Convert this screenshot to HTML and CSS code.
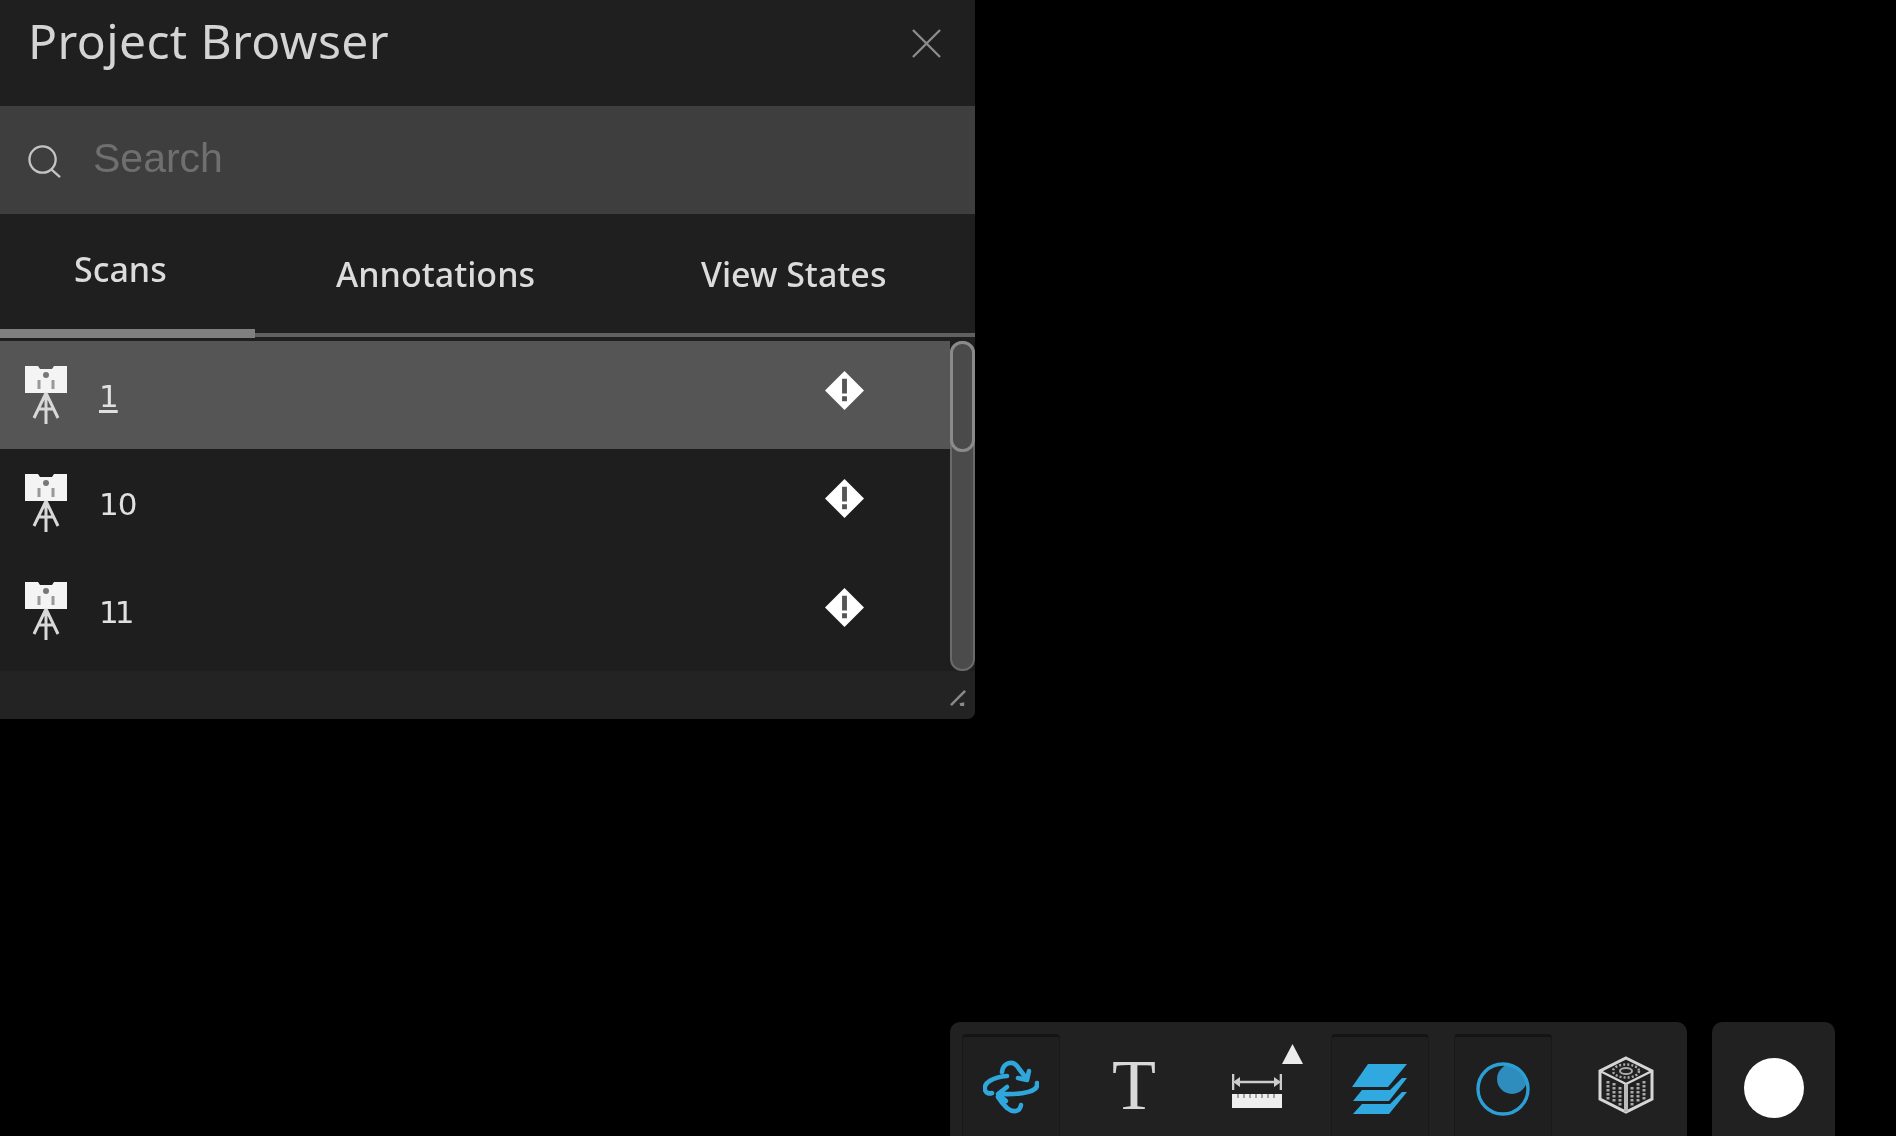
FILE: index.html
```html
<!DOCTYPE html>
<html lang="en">
<head>
<meta charset="utf-8">
<title>Project Browser</title>
<link rel="stylesheet" href="styles.css">
</head>
<body>
<svg class="defs" width="0" height="0" aria-hidden="true">
  <defs><clipPath id="moon-clip"><circle cx="27" cy="27" r="25"/></clipPath></defs>
  <symbol id="scanner" viewBox="0 0 44 62">
    <path d="M1 2h13l2 3h12l2-3h13v27H1z" fill="#f4f4f4"/>
    <circle cx="22" cy="11" r="3" fill="#777"/>
    <path d="M15 16v9M29 16v9" stroke="#999" stroke-width="3" fill="none"/>
    <path d="M22 29L10 54M22 29L34 54M22 29V60M14 45H30" stroke="#d8d8d8" stroke-width="3" fill="none"/>
  </symbol>
  <symbol id="warn" viewBox="0 0 42 42">
    <path d="M21 1L41 21L21 41L1 21z" fill="#fff"/>
    <path d="M18.5 9h5v15h-5zM18.5 27h5v5h-5z" fill="#555"/>
  </symbol>
</svg>
<div class="app">
  <section class="panel">
    <header class="panel-head">
      <h1 class="panel-title">Project Browser</h1>
      <svg class="close" viewBox="0 0 30 30"><path d="M1 1L29 29M29 1L1 29" stroke="#8c8c8c" stroke-width="2.4" fill="none"/></svg>
    </header>
    <div class="search">
      <svg class="search-icon" viewBox="0 0 34 34"><circle cx="15" cy="15" r="13.5" stroke="#c4c4c4" stroke-width="2.4" fill="none"/><path d="M24 25L33 33" stroke="#c4c4c4" stroke-width="2.4"/></svg>
      <span class="search-text">Search</span>
    </div>
    <nav class="tabs">
      <span class="tab tab-scans">Scans</span>
      <span class="tab tab-annotations">Annotations</span>
      <span class="tab tab-views">View States</span>
    </nav>
    <div class="list-wrap">
      <ul class="rows">
        <li class="row row-selected">
          <svg class="scanner"><use href="#scanner"/></svg>
          <span class="row-name row-name-under">1</span>
          <svg class="warn"><use href="#warn"/></svg>
        </li>
        <li class="row">
          <svg class="scanner"><use href="#scanner"/></svg>
          <span class="row-name">10</span>
          <svg class="warn"><use href="#warn"/></svg>
        </li>
        <li class="row">
          <svg class="scanner"><use href="#scanner"/></svg>
          <span class="row-name row-name-tight">11</span>
          <svg class="warn"><use href="#warn"/></svg>
        </li>
      </ul>
      <div class="track"><div class="thumb"></div></div>
    </div>
    <footer class="panel-foot">
      <svg class="grip" viewBox="0 0 18 18"><path d="M1 17L16 2" stroke="#8a8a8a" stroke-width="2.6" fill="none"/><path d="M10 15l5-1v4h-4z" fill="#8a8a8a"/></svg>
    </footer>
  </section>

  <div class="dock">
    <div class="toolbar">
      <div class="tool tool-on">
        <svg class="ic-sync" viewBox="0 0 56 56" fill="none" stroke="#2fa6dc" stroke-width="4.6" stroke-linecap="round" stroke-linejoin="round">
          <path d="M19 13C20 4 29 1 34 7L43 19"/>
          <path d="M35 19L44 21L46 12"/>
          <path d="M24 17C10 18 0 24 2 31C3 34 6 35 9 34"/>
          <path d="M54 24C56 32 42 36 16 35"/>
          <path d="M24 28L15 35L23 42"/>
          <path d="M15 38C18 43 21 46 24 49C30 54 37 53 38 46"/>
        </svg>
      </div>
      <div class="tool"><span class="t-glyph">T</span></div>
      <div class="tool tool-measure">
        <svg class="ic-tri" viewBox="0 0 22 22"><path d="M11 0L22 21H0z" fill="#ececec"/></svg>
        <svg class="ic-ruler" viewBox="0 0 50 34">
          <path d="M1 0V16M49 0V16M4 8H46" stroke="#ccc" stroke-width="2.6" fill="none"/>
          <path d="M1 8L8 3V13zM49 8L42 3V13z" fill="#ccc"/>
          <path d="M0 20H50V34H0z" fill="#eee"/>
          <path d="M6 20v4M12 20v4M18 20v4M24 20v4M30 20v4M36 20v4M42 20v4" stroke="#888" stroke-width="1.5"/>
        </svg>
      </div>
      <div class="tool tool-on">
        <svg class="ic-layers" viewBox="0 0 56 50" fill="#2fa9e0">
          <path d="M16 0H55L36 23H0z"/>
          <path d="M50 14L55 14L37 37H1L10 26H38z"/>
          <path d="M50 28L55 28L37 50H1L10 40H38z"/>
        </svg>
      </div>
      <div class="tool tool-on">
        <svg class="ic-moon" viewBox="0 0 54 54">
          <circle cx="36" cy="17" r="15" fill="#2e8dbd" clip-path="url(#moon-clip)"/>
          <circle cx="27" cy="27" r="25" fill="none" stroke="#2c9fd4" stroke-width="3.4"/>
        </svg>
      </div>
      <div class="tool">
        <svg class="ic-cube" viewBox="0 0 56 58" fill="none" stroke="#d6d6d6">
          <path d="M28 2L54 15V43L28 56L2 43V15z" stroke-width="3"/>
          <path d="M2 15L28 28L54 15" stroke-width="2.4"/>
          <path d="M28 28V56" stroke-width="4" stroke="#bbb"/>
          <ellipse cx="28" cy="15" rx="13" ry="6.5" stroke-dasharray="2 2" stroke-width="2.4" stroke="#aaa"/>
          <ellipse cx="28" cy="15" rx="6" ry="3" stroke-width="2" stroke="#aaa"/>
          <path d="M10 25V44M16 27V47M22 31V50M34 31V50M40 27V47M46 25V44" stroke-dasharray="2.5 1.5" stroke-width="3" stroke="#aaa"/>
        </svg>
      </div>
    </div>
    <div class="toolbar toolbar-record">
      <span class="dot"></span>
    </div>
  </div>
</div>
</body>
</html>
```

FILE: styles.css
```css
* { box-sizing: border-box; }
html, body { margin: 0; padding: 0; background: #000; }
.defs { position: absolute; }

.app {
  width: 1896px;
  height: 1136px;
  overflow: hidden;
  display: flex;
  flex-direction: column;
  justify-content: space-between;
  background: #000;
  filter: blur(0.6px);
}

/* Project browser */
.panel {
  width: 975px;
  height: 719px;
  display: flex;
  flex-direction: column;
  background: #1f1f1f;
  border-bottom-right-radius: 8px;
  overflow: hidden;
}
.panel-head {
  height: 106px;
  flex: none;
  display: flex;
  align-items: flex-start;
  justify-content: space-between;
  padding: 13px 34px 0 28px;
}
.panel-title {
  margin: 0;
  font: 400 48px/56px "Noto Sans", sans-serif;
  letter-spacing: 0.4px;
  color: #d4d4d4;
}
.close { width: 29px; height: 29px; margin-top: 16px; }

.search {
  height: 108px;
  flex: none;
  display: flex;
  align-items: center;
  padding-left: 28px;
  gap: 32px;
  background: #3e3e3e;
}
.search-icon { width: 33px; height: 33px; margin-top: 2px; }
.search-text {
  font: 400 41px/48px "Liberation Sans", sans-serif;
  color: #6f6f6f;
  margin-top: -5px;
}

.tabs {
  height: 123px;
  flex: none;
  position: relative;
  display: flex;
  border-bottom: 4px solid #616161;
  margin-bottom: 4px;
}
.tab {
  font: 500 34px/44px "Noto Sans", sans-serif;
  color: #dcdcdc;
}
.tab-scans {
  width: 255px;
  flex: none;
  padding: 33px 0 0 74px;
  position: relative;
}
.tab-scans::after {
  content: "";
  position: absolute;
  left: 0;
  bottom: -5px;
  width: 255px;
  height: 9px;
  background: #808080;
}
.tab-annotations { margin-left: 81px; padding-top: 38px; }
.tab-views { margin-left: 166px; padding-top: 38px; }

.list-wrap {
  height: 330px;
  flex: none;
  display: flex;
  background: #1e1e1e;
}
.rows { flex: 1; margin: 0; padding: 0; list-style: none; }
.row {
  height: 108.3px;
  display: flex;
  align-items: center;
  padding-left: 24px;
  position: relative;
}
.row-selected { background: #555; }
.scanner { width: 44px; height: 62px; flex: none; margin-top: -1px; }
.row-name {
  margin-left: 31px;
  width: 0;
  flex: 1;
  font: 400 31px/40px "DejaVu Sans", sans-serif;
  letter-spacing: -1px;
  color: #e0e0e0;
  margin-top: 1px;
}
.row-name-under { text-decoration: underline; text-underline-offset: 3px; }
.row-name-tight { letter-spacing: -4px; }
.warn { width: 41px; height: 41px; flex: none; margin-right: 85px; margin-top: -9px; }

.track {
  width: 25px;
  flex: none;
  background: #4b4b4b;
  border: 2px solid #6a6a6a;
  border-radius: 12px;
  position: relative;
}
.thumb {
  position: absolute;
  left: -2px;
  right: -2px;
  top: -2px;
  height: 111px;
  background: #4a4a4a;
  border: 3px solid #8a8a8a;
  border-radius: 12px;
}

.panel-foot {
  flex: 1;
  background: #232323;
  display: flex;
  justify-content: flex-end;
  align-items: center;
  padding: 0 8px 0 0;
}
.grip { width: 17px; height: 17px; margin-top: 4px; }

/* Bottom toolbars */
.dock {
  display: flex;
  gap: 25px;
  margin-left: 950px;
  height: 114px;
  flex: none;
}
.toolbar {
  display: flex;
  gap: 25px;
  padding: 12px 12px 0;
  background: #212121;
  border-radius: 10px 10px 0 0;
}
.toolbar-record {
  width: 123px;
  align-items: center;
  justify-content: center;
  padding: 18px 0 0;
}
.tool {
  width: 98px;
  display: flex;
  align-items: center;
  justify-content: center;
  position: relative;
  border-radius: 4px 4px 0 0;
}
.tool-on {
  background: #1f1f1f;
  border-top: 3px solid #141414;
  border-left: 1px solid #191919;
  border-right: 1px solid #191919;
}
.ic-sync { width: 56px; height: 56px; }
.t-glyph {
  font: 400 72px/66px "Liberation Serif", serif;
  color: #d8d8d8;
}
.ic-ruler { width: 50px; height: 34px; margin-top: 12px; }
.ic-tri {
  position: absolute;
  right: 3px;
  top: 10px;
  width: 21px;
  height: 21px;
}
.ic-layers { width: 56px; height: 50px; margin-top: 4px; }
.ic-moon { width: 54px; height: 54px; margin-top: 4px; }
.ic-cube { width: 56px; height: 58px; }
.dot {
  width: 60px;
  height: 60px;
  border-radius: 50%;
  background: #fff;
}
```
